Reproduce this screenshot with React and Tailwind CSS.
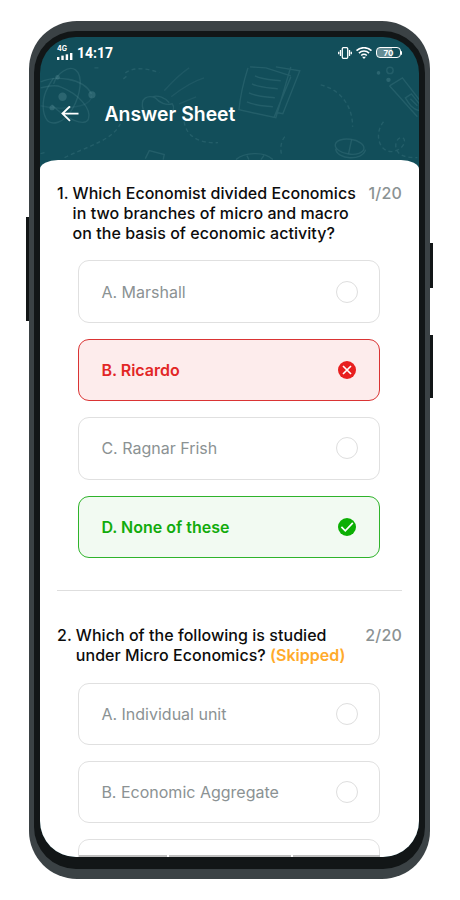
import React from 'react';

const questions = [
  {
    no: '1.',
    count: '1/20',
    lines: ['Which Economist divided Economics', 'in two branches of micro and macro', 'on the basis of economic activity?'],
    options: [
      { label: 'A. Marshall' },
      { label: 'B. Ricardo', status: 'wrong' },
      { label: 'C. Ragnar Frish' },
      { label: 'D. None of these', status: 'correct' },
    ],
  },
  {
    no: '2.',
    count: '2/20',
    lines: ['Which of the following is studied', 'under Micro Economics?'],
    skipped: true,
    options: [
      { label: 'A. Individual unit' },
      { label: 'B. Economic Aggregate' },
      { label: '' },
    ],
  },
];

const optionStyles = {
  wrong: 'border-[#da3434] bg-[#fdecec] text-[#e22626] font-semibold',
  correct: 'border-[#2fb32b] bg-[#f2faf2] text-[#12ab0c] font-semibold',
  none: 'border-[#e0e0e0] bg-white text-[#8b9293]',
};

// Mark on the right side of an option
function Mark({ status }) {
  if (status === 'wrong') {
    return (
      <svg className="mr-0.5 size-[18px]" viewBox="0 0 18 18" fill="none">
        <circle cx="9" cy="9" r="9" fill="#e81f1f" />
        <path d="M5 5l8 8M13 5l-8 8" stroke="#fff" strokeWidth="1.7" />
      </svg>
    );
  }
  if (status === 'correct') {
    return (
      <svg className="mr-0.5 size-[18px]" viewBox="0 0 18 18" fill="none">
        <circle cx="9" cy="9" r="9" fill="#0caf04" />
        <path d="M3.4 8.9l3.9 3.9 7.5-7.9" stroke="#fff" strokeWidth="1.7" />
      </svg>
    );
  }
  return <span className="size-[22px] rounded-full border border-[#dedede]" />;
}

function Option({ label, status }) {
  return (
    <div className={`flex h-[62.4px] shrink-0 items-center justify-between rounded-[11px] border pl-[22px] pr-[21.5px] text-base ${optionStyles[status || 'none']}`}>
      <span>{label}</span>
      <Mark status={status} />
    </div>
  );
}

function Question({ no, count, lines, skipped, options }) {
  return (
    <section>
      <div className="flex text-base leading-[19.8px] font-medium tracking-[0.045px] text-[#0c0c0c]">
        <span className="mr-1">{no}</span>
        <h2 className="flex-1 whitespace-nowrap">
          {lines.map((line, i) => (
            <span key={line} className="block">
              {line}
              {skipped && i === lines.length - 1 && (
                <span className="font-semibold text-[#ffab2b]"> (Skipped)</span>
              )}
            </span>
          ))}
        </h2>
        <span className="tracking-[0.2px] text-[#8b9293]">{count}</span>
      </div>
      <div className="mt-[16.6px] ml-[21.4px] mr-[21.6px] flex flex-col gap-4">
        {options.map((option) => (
          <Option key={option.label} {...option} />
        ))}
      </div>
    </section>
  );
}

function StatusBar() {
  return (
    <div className="relative flex h-[31px] items-center justify-between pl-[17px] pr-[17px] text-white">
      <div className="flex items-center gap-1">
        <div className="flex w-4 flex-col">
          <span className="text-[7px] leading-[6px] font-bold">4G</span>
          <svg className="mt-px h-[7px] w-4" viewBox="0 0 16 7" fill="currentColor">
            <rect x="0" y="4" width="2.4" height="3" />
            <rect x="4.3" y="2.6" width="2.4" height="4.4" />
            <rect x="8.7" y="1.3" width="2.4" height="5.7" />
            <rect x="13" y="0" width="2.4" height="7" />
          </svg>
        </div>
        <span className="font-['Roboto'] text-[14px] leading-4 font-bold">14:17</span>
      </div>
      <div className="flex items-center gap-1">
        <svg className="h-3 w-3.5" viewBox="0 0 14 12" fill="none" stroke="currentColor" strokeWidth="1.3">
          <rect x="4.3" y="0.7" width="5.4" height="10.6" rx="1" />
          <path d="M2.5 3v6M11.5 3v6M0.7 4.8v2.4M13.3 4.8v2.4" />
        </svg>
        <svg className="h-3 w-4" viewBox="0 0 16 12" fill="none" stroke="currentColor" strokeWidth="1.5">
          <path d="M0.5 3.6a11 11 0 0 1 15 0M2.9 6.1a7.4 7.4 0 0 1 10.2 0M5.2 8.5a4 4 0 0 1 5.6 0" />
          <path d="M6 9.7h4L8 12z" fill="currentColor" stroke="none" />
        </svg>
        <div className="flex items-center">
          <span className="flex h-[11px] w-[25px] items-center justify-center rounded-[4px] border border-white bg-linear-to-r from-white/35 from-65% to-transparent to-65% text-[8px] leading-none font-bold">
            70
          </span>
          <span className="h-1 w-px rounded-r bg-white" />
        </div>
      </div>
    </div>
  );
}

// Faint science drawings behind the title
function Doodles() {
  return (
    <svg className="absolute inset-0 h-full w-full" viewBox="40 37 379 123" fill="none" stroke="#5b919a" strokeOpacity="0.24" strokeWidth="1.4">
      <g fill="#5b919a" fillOpacity="0.35" stroke="none">
        <circle cx="62" cy="97" r="4.2" />
        <circle cx="57" cy="77.5" r="2.3" />
        <circle cx="91.5" cy="95" r="3.6" />
        <circle cx="51.5" cy="108" r="2.6" />
        <circle cx="379" cy="73" r="1.8" />
        <circle cx="389" cy="80" r="2.2" />
      </g>
      <path d="M40 82c14-6 42-5 51 12M40 88c6-1 14-4 20-1 18 7 31 22 28 32-3 9-23 0-37-14" />
      <path d="M53 84c3-10 15-19 22-14 8 6 5 25-3 39-8 14-22 19-27 9-4-8-3-21 2-30 2-4 4-7 6-10" />
      <path d="M40 106c12 3 28 3 40 0 8-2 11-5 11-10" strokeOpacity="0.14" />
      <path d="M64 158c22-11 48-17 56-34M184 122c2 14 14 22 34 21M40 154l4-1M94 68h6M123 79l5-4M125 73c8-6 22-5 34 0" strokeDasharray="4 3" />
      <path d="M143 110c-4-12 5-15 12-12 4 5 11 8 17 6 3 4 1 8-2 10M152 97c6-2 13 1 17 6" />
      <path d="M164 91c8-9 16-17 25-23M171 97c10-8 20-15 33-19M179 104l17-7" strokeOpacity="0.16" />
      <path d="M145 159l4-8 15 4-1 5" />
      <path d="M248 68c-5 16-8 31-9 42l37 8 15-51M291 77l-17 41M250 67l16 1 25 8M276 67l24 4-17 43-5-1M255 76c8 4 18 4 26 5M252 84c8 4 18 4 26 5M249 93c8 4 18 4 26 5M247 102c8 4 18 4 26 5" />
      <path d="M321 85c20 5 32 21 32 42M285 137c-4 5-5 12-3 19M384 122c-10 13-4 30 8 30 12-1 16-12 11-14-6-1-10 10-3 16 5 4 12 4 18 4" strokeDasharray="4 3" />
      <ellipse cx="350" cy="147" rx="14.5" ry="7.5" transform="rotate(8 350 147)" />
      <path d="M336 149c1 11 27 13 30 1M352 140l-3 14M236 160c8-7 28-9 37 0M249 160l-2-4M261 160l3-4" />
      <circle cx="390.5" cy="70.5" r="3.2" />
      <path d="M390 86l13-8 17 22M390 86l28 31M406 98l6-4 8 10v7c-7-2-10-6-14-13zM411 99l7 7" />
    </svg>
  );
}

function App() {
  return (
    <div className="flex h-[900px] w-[460px] items-start bg-white pt-[21px] pl-[26px] font-['Inter',sans-serif]">
      {/* volume side button */}
      <div className="mt-[196px] h-[104px] w-[3px] bg-[#121617]" />

      <div className="h-[858px] w-[401px] rounded-[48px] bg-[#3b4245] px-[5px] py-[10px]">
        <div className="h-full rounded-[42px] bg-[#121617] px-[6px] pt-[6px] pb-[12px]">
          <div className="flex h-full flex-col overflow-hidden rounded-[36px] bg-[#124e5a]">
            <header className="relative h-[122.6px] shrink-0">
              <Doodles />
              <StatusBar />
              <div className="relative mt-[30px] flex h-8 items-center pl-[21px] text-white">
                <svg className="h-4 w-[18px]" viewBox="0 0 18 16" fill="none" stroke="currentColor" strokeWidth="1.9">
                  <path d="M17.5 7.6H1.5M9 0.3L1.5 7.6 9 14.9" />
                </svg>
                <h1 className="mt-px ml-[25.5px] text-[19.4px] font-semibold">Answer Sheet</h1>
              </div>
            </header>

            <main className="relative flex-1 overflow-hidden rounded-t-[18px_9px] bg-white px-[17px] pt-[24.8px]">
              <Question {...questions[0]} />
              <hr className="mt-8 mb-[35.4px] border-[#dedede]" />
              <Question {...questions[1]} />
              <div className="absolute bottom-0 left-[39px] flex h-[2px] w-[301px] gap-[2px]">
                <span className="w-[88px] bg-[#bfbfbf]" />
                <span className="w-[122px] bg-[#bfbfbf]" />
                <span className="flex-1 bg-[#bfbfbf]" />
              </div>
            </main>
          </div>
        </div>
      </div>

      {/* power and assistant side buttons */}
      <div className="mt-[222px] flex flex-col gap-[47px]">
        <div className="h-[45px] w-[3px] bg-[#121617]" />
        <div className="h-[63px] w-[3px] bg-[#121617]" />
      </div>
    </div>
  );
}

export default App;
